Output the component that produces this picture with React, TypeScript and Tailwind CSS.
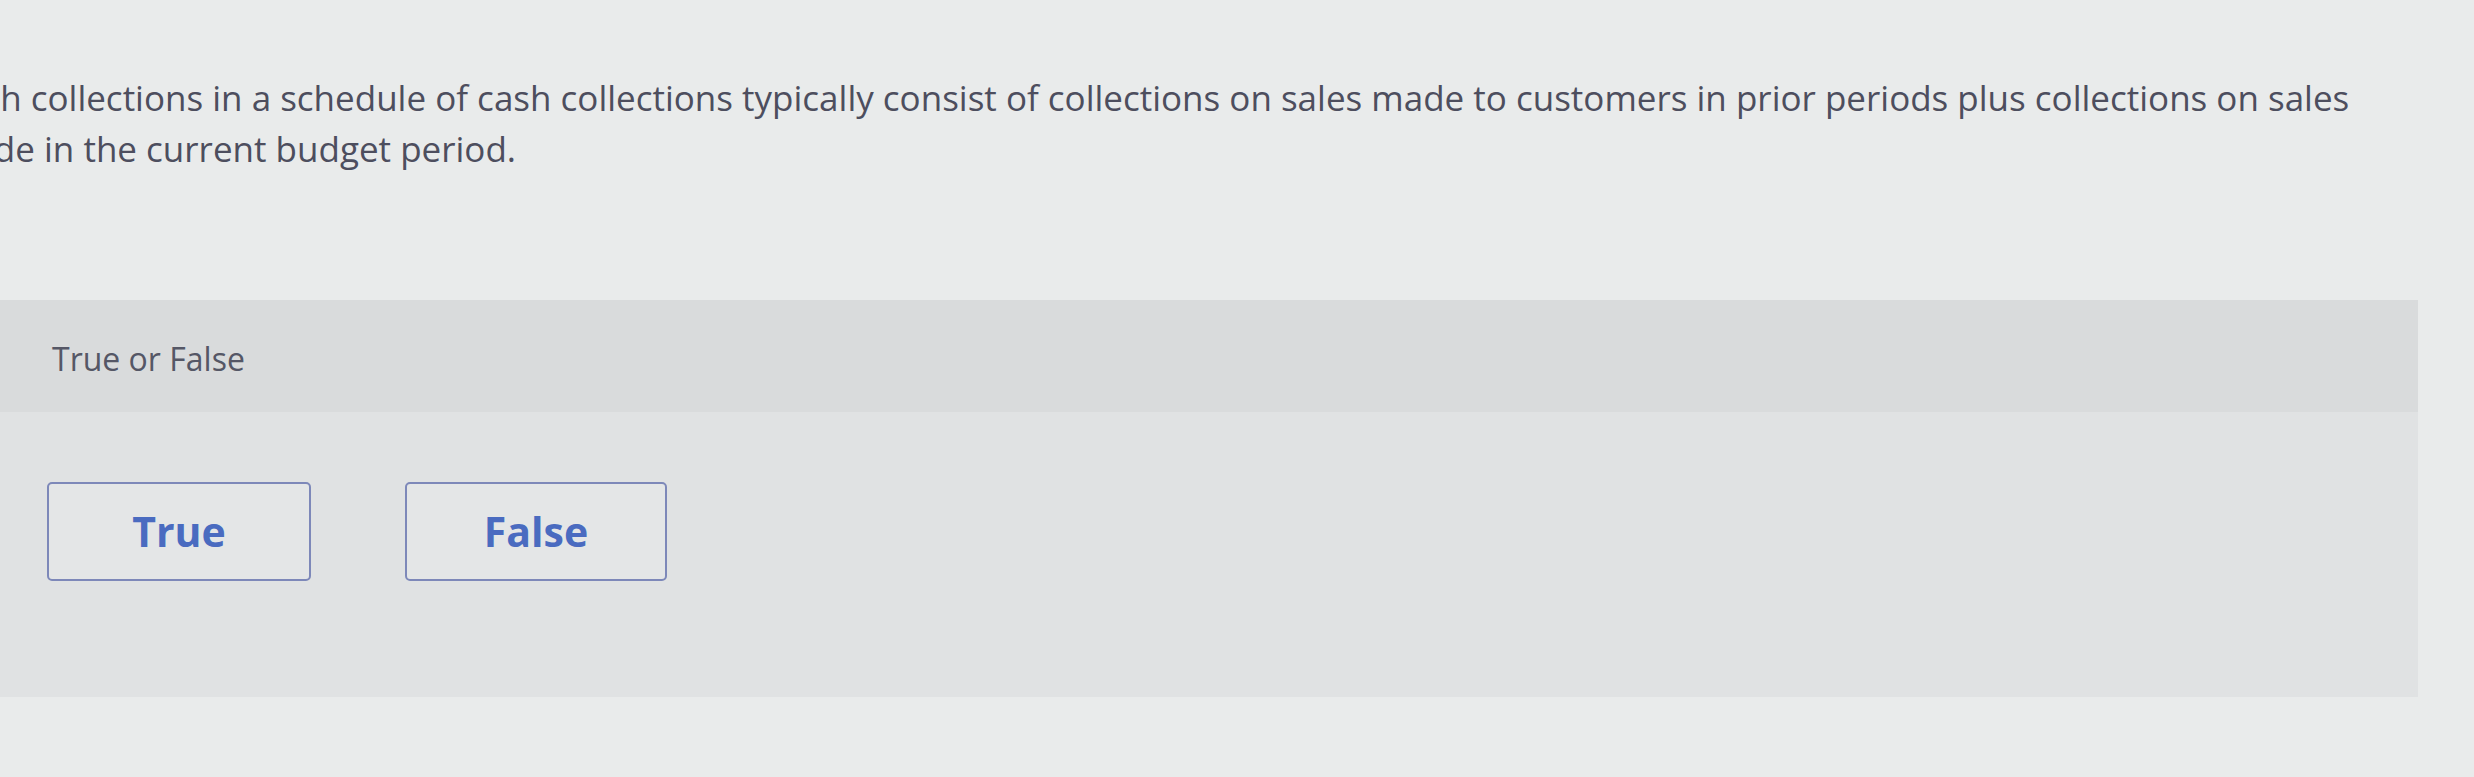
import React from "react";

const options = ["True", "False"];

export default function App() {
  return (
    <div className="h-[777px] w-full overflow-hidden bg-[#e9ebeb] font-['Open_Sans','Liberation_Sans',sans-serif]">
      {/* Question text, cut off at the left edge of the photo */}
      <p className="ml-[-58px] pt-[72px] whitespace-nowrap text-[35px] leading-[51px] text-[#4d4e5e]">
        Cash collections in a schedule of cash collections typically consist of collections on sales made to customers in prior periods plus collections on sales
        <br />
        made in the current budget period.
      </p>

      {/* Answer panel */}
      <div className="mt-[126px] w-[2418px] bg-[#e0e2e3]">
        <div className="h-[112px] bg-[#d9dbdc] pl-[52px] pt-[39px]">
          <span className="text-[32px] leading-[40px] text-[#555766]">True or False</span>
        </div>

        <div className="flex h-[285px] items-start gap-[94px] pl-[47px] pt-[70px]">
          {options.map((label, i) => (
            <button
              key={label}
              className={`flex h-[99px] items-center justify-center rounded-[5px] border-2 border-[#7d88b9] bg-[#e4e6e7] text-[41px] font-bold text-[#4a6bc0] ${
                i === 0 ? "w-[264px]" : "w-[262px]"
              }`}
            >
              {label}
            </button>
          ))}
        </div>
      </div>
    </div>
  );
}
